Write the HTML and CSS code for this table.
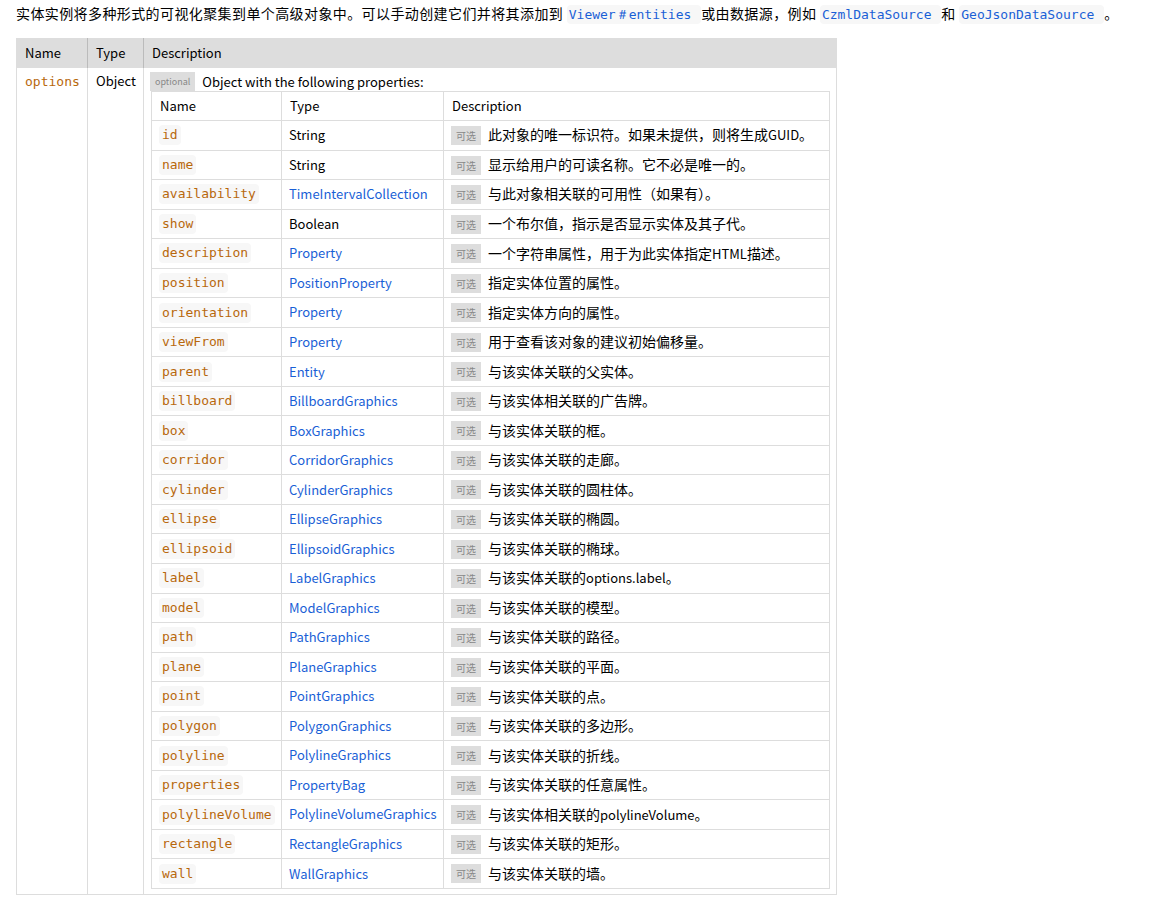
FILE: index.html
```html
<!DOCTYPE html>
<html lang="zh">
<head>
<meta charset="utf-8">
<title>Entity</title>
<link rel="stylesheet" href="styles.css">
</head>
<body>
<p class="intro">实体实例将多种形式的可视化聚集到单个高级对象中。可以手动创建它们并将其添加到 <code class="ln">Viewer＃entities </code>或由数据源，例如 <code class="ln">CzmlDataSource </code>和 <code class="ln">GeoJsonDataSource </code> 。</p>
<table class="params outer">
<thead><tr><th class="c-name">Name</th><th class="c-type">Type</th><th class="c-desc">Description</th></tr></thead>
<tbody><tr>
<td class="c-name"><code class="nm plain">options</code></td>
<td class="c-type en">Object</td>
<td class="c-desc">
<div class="optline"><span class="opt">optional</span><span class="en">Object with the following properties:</span></div>
<table class="params inner">
<thead><tr><th class="i-name">Name</th><th class="i-type">Type</th><th class="i-desc">Description</th></tr></thead>
<tbody>
<tr><td><code class="nm">id</code></td><td class="en">String</td><td><span class="kx">可选</span>此对象的唯一标识符。如果未提供，则将生成<span class="en">GUID</span>。</td></tr>
<tr><td><code class="nm">name</code></td><td class="en">String</td><td><span class="kx">可选</span>显示给用户的可读名称。它不必是唯一的。</td></tr>
<tr><td><code class="nm">availability</code></td><td class="en"><a>TimeIntervalCollection</a></td><td><span class="kx">可选</span>与此对象相关联的可用性（如果有）。</td></tr>
<tr><td><code class="nm">show</code></td><td class="en">Boolean</td><td><span class="kx">可选</span>一个布尔值，指示是否显示实体及其子代。</td></tr>
<tr><td><code class="nm">description</code></td><td class="en"><a>Property</a></td><td><span class="kx">可选</span>一个字符串属性，用于为此实体指定<span class="en">HTML</span>描述。</td></tr>
<tr><td><code class="nm">position</code></td><td class="en"><a>PositionProperty</a></td><td><span class="kx">可选</span>指定实体位置的属性。</td></tr>
<tr><td><code class="nm">orientation</code></td><td class="en"><a>Property</a></td><td><span class="kx">可选</span>指定实体方向的属性。</td></tr>
<tr><td><code class="nm">viewFrom</code></td><td class="en"><a>Property</a></td><td><span class="kx">可选</span>用于查看该对象的建议初始偏移量。</td></tr>
<tr><td><code class="nm">parent</code></td><td class="en"><a>Entity</a></td><td><span class="kx">可选</span>与该实体关联的父实体。</td></tr>
<tr><td><code class="nm">billboard</code></td><td class="en"><a>BillboardGraphics</a></td><td><span class="kx">可选</span>与该实体相关联的广告牌。</td></tr>
<tr><td><code class="nm">box</code></td><td class="en"><a>BoxGraphics</a></td><td><span class="kx">可选</span>与该实体关联的框。</td></tr>
<tr><td><code class="nm">corridor</code></td><td class="en"><a>CorridorGraphics</a></td><td><span class="kx">可选</span>与该实体关联的走廊。</td></tr>
<tr><td><code class="nm">cylinder</code></td><td class="en"><a>CylinderGraphics</a></td><td><span class="kx">可选</span>与该实体关联的圆柱体。</td></tr>
<tr><td><code class="nm">ellipse</code></td><td class="en"><a>EllipseGraphics</a></td><td><span class="kx">可选</span>与该实体关联的椭圆。</td></tr>
<tr><td><code class="nm">ellipsoid</code></td><td class="en"><a>EllipsoidGraphics</a></td><td><span class="kx">可选</span>与该实体关联的椭球。</td></tr>
<tr><td><code class="nm">label</code></td><td class="en"><a>LabelGraphics</a></td><td><span class="kx">可选</span>与该实体关联的<span class="en">options.label</span>。</td></tr>
<tr><td><code class="nm">model</code></td><td class="en"><a>ModelGraphics</a></td><td><span class="kx">可选</span>与该实体关联的模型。</td></tr>
<tr><td><code class="nm">path</code></td><td class="en"><a>PathGraphics</a></td><td><span class="kx">可选</span>与该实体关联的路径。</td></tr>
<tr><td><code class="nm">plane</code></td><td class="en"><a>PlaneGraphics</a></td><td><span class="kx">可选</span>与该实体关联的平面。</td></tr>
<tr><td><code class="nm">point</code></td><td class="en"><a>PointGraphics</a></td><td><span class="kx">可选</span>与该实体关联的点。</td></tr>
<tr><td><code class="nm">polygon</code></td><td class="en"><a>PolygonGraphics</a></td><td><span class="kx">可选</span>与该实体关联的多边形。</td></tr>
<tr><td><code class="nm">polyline</code></td><td class="en"><a>PolylineGraphics</a></td><td><span class="kx">可选</span>与该实体关联的折线。</td></tr>
<tr><td><code class="nm">properties</code></td><td class="en"><a>PropertyBag</a></td><td><span class="kx">可选</span>与该实体关联的任意属性。</td></tr>
<tr><td><code class="nm">polylineVolume</code></td><td class="en"><a>PolylineVolumeGraphics</a></td><td><span class="kx">可选</span>与该实体相关联的<span class="en">polylineVolume</span>。</td></tr>
<tr><td><code class="nm">rectangle</code></td><td class="en"><a>RectangleGraphics</a></td><td><span class="kx">可选</span>与该实体关联的矩形。</td></tr>
<tr><td><code class="nm">wall</code></td><td class="en"><a>WallGraphics</a></td><td><span class="kx">可选</span>与该实体关联的墙。</td></tr>
</tbody>
</table>
</td>
</tr></tbody>
</table>
</body>
</html>
```
FILE: styles.css
```css
html, body {
  margin: 0;
  padding: 0;
  background: #fff;
}
body {
  padding: 0 16px;
  font-family: "Noto Sans CJK SC", "Noto Sans", sans-serif;
  font-size: 14px;
  color: #000;
}
.en {
  font-size: 13px;
}
.intro {
  margin: 0;
  padding-top: 3px;
  line-height: 20px;
  height: 35px;
  letter-spacing: 0.4px;
}
code {
  font-family: "DejaVu Sans Mono", "Liberation Mono", monospace;
  font-size: 13px;
  letter-spacing: 0;
  background: #f7f7f7;
  border-radius: 4px;
  padding: 2px 2px;
}
code.ln {
  color: #1a5fd6;
}
code.nm {
  color: #b8680c;
  display: inline-block;
  height: 20px;
  line-height: 20px;
  padding: 0 3px;
  vertical-align: middle;
  position: relative;
  top: -1px;
}
code.nm.plain {
  background: none;
  padding: 0;
  top: 0;
}
a {
  color: #1a5fd6;
  text-decoration: none;
}
.params {
  border-collapse: collapse;
  border: 1px solid #ddd;
  table-layout: fixed;
}
.params th {
  text-align: left;
  font-weight: normal;
  font-size: 13px;
  background: #ddd;
  height: 29px;
  padding: 0 8px;
  line-height: 20px;
  vertical-align: middle;
  box-sizing: border-box;
}
.outer th {
  border-left: 1px solid #bbb;
}
.outer th:first-child {
  border-left: 1px solid #ddd;
}
.outer {
  width: 821px;
}
.outer td {
  border: 1px solid #ddd;
  vertical-align: top;
  padding: 3px 7px 5px 8px;
  line-height: 19px;
}
.outer td.c-desc {
  padding: 4px 6px 5px 7px;
}
.c-name { width: 71px; }
.c-type { width: 56px; }
.optline {
  display: flex;
  align-items: center;
  gap: 7px;
  height: 19px;
  margin-left: -1px;
}
.opt {
  background: #ddd;
  color: #888;
  font-size: 9px;
  padding: 0 5px;
  line-height: 19px;
  height: 19px;
}
.inner {
  width: 679px;
}
.inner th {
  background: #fff;
  border: 1px solid #ddd;
}
.inner td {
  border: 1px solid #ddd;
  height: 29.54px;
  box-sizing: border-box;
  padding: 0 8px 0 7px;
  line-height: 20px;
  vertical-align: middle;
  white-space: nowrap;
}
.i-name { width: 130px; }
.i-type { width: 162px; }
.kx {
  display: inline-block;
  background: #ddd;
  color: #888;
  font-size: 10px;
  width: 30px;
  height: 19px;
  line-height: 19px;
  text-align: center;
  margin-right: 7px;
  vertical-align: middle;
  position: relative;
  top: -1px;
}
```
